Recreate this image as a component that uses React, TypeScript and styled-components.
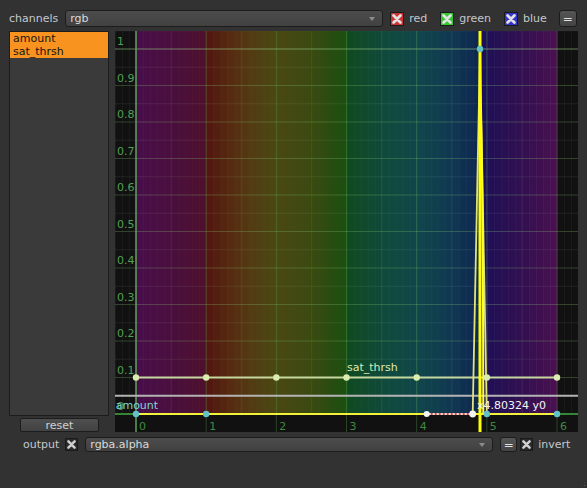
import React from 'react';
import styled, { createGlobalStyle } from 'styled-components';

const GlobalStyle = createGlobalStyle`
  html, body {
    margin: 0;
    padding: 0;
    background: #323232;
  }
  body {
    font-family: "DejaVu Sans", "Liberation Sans", sans-serif;
  }
`;

const Panel = styled.div`
  position: relative;
  width: 587px;
  height: 488px;
  background: #323232;
  color: #c4c8cc;
  font-size: 11px;
  display: flex;
  flex-direction: column;
  overflow: hidden;
`;

const Toolbar = styled.div`
  display: flex;
  align-items: center;
  height: 17px;
  margin-top: 10px;
  padding-left: 9px;
`;

const BottomBar = styled.div`
  display: flex;
  align-items: center;
  height: 15px;
  margin-top: 5px;
  padding-left: 23px;
`;

const Label = styled.span<{ $gap?: number }>`
  margin-left: ${(p) => p.$gap ?? 0}px;
  white-space: nowrap;
  line-height: 1;
`;

const Dropdown = styled.div<{ $w: number; $h: number; $gap: number }>`
  box-sizing: border-box;
  width: ${(p) => p.$w}px;
  height: ${(p) => p.$h}px;
  margin-left: ${(p) => p.$gap}px;
  border: 1px solid #1c1c1c;
  border-radius: 3px;
  background: linear-gradient(#4c4c4c, #414141);
  color: #dadada;
  display: flex;
  align-items: center;
  padding: 0 7px 0 4px;
`;

const DropText = styled.span`
  flex: 1;
  line-height: 1;
`;

const DropArrow = styled.span`
  width: 0;
  height: 0;
  border-left: 3px solid transparent;
  border-right: 3px solid transparent;
  border-top: 4px solid #8c8c8c;
`;

const CheckBox = styled.span<{ $fill: string; $size: number; $gap: number }>`
  box-sizing: border-box;
  width: ${(p) => p.$size}px;
  height: ${(p) => p.$size}px;
  margin-left: ${(p) => p.$gap}px;
  background: ${(p) => p.$fill};
  border: 1px solid #1a1a1a;
  display: flex;
  align-items: center;
  justify-content: center;
  flex-shrink: 0;
`;

const SmallButton = styled.div<{ $w: number; $h: number; $gap: number }>`
  box-sizing: border-box;
  width: ${(p) => p.$w}px;
  height: ${(p) => p.$h}px;
  margin-left: ${(p) => p.$gap}px;
  border: 1px solid #1c1c1c;
  border-radius: 3px;
  background: linear-gradient(#555, #444);
  color: #e0e0e0;
  display: flex;
  align-items: center;
  justify-content: center;
  font-size: 12px;
  line-height: 1;
`;

const Middle = styled.div`
  display: flex;
  height: 401px;
  margin-top: 4px;
`;

const LeftColumn = styled.div`
  display: flex;
  flex-direction: column;
  width: 100px;
  margin-left: 9px;
`;

const CurveList = styled.div`
  box-sizing: border-box;
  height: 386px;
  background: #3a3a3a;
  border: 1px solid #1c1c1c;
  display: flex;
  flex-direction: column;
`;

const CurveItem = styled.div`
  height: 13px;
  line-height: 13px;
  padding-left: 3px;
  background: #f7931e;
  color: #161616;
`;

const ResetButton = styled.div`
  box-sizing: border-box;
  width: 79px;
  height: 14px;
  margin: 2px 0 0 11px;
  border: 1px solid #1c1c1c;
  border-radius: 2px;
  background: linear-gradient(#4e4e4e, #424242);
  color: #cfcfcf;
  display: flex;
  align-items: center;
  justify-content: center;
  line-height: 1;
`;

const GraphBox = styled.div`
  width: 463px;
  height: 401px;
  margin-left: 6px;
  background: #111;
`;

const Grip = styled.div`
  position: absolute;
  right: 1px;
  bottom: 1px;
  width: 6px;
  height: 6px;
  background: radial-gradient(circle, #5a5a5a 0.7px, transparent 1px) 0 0 / 3px 3px;
  clip-path: polygon(100% 0, 100% 100%, 0 100%);
`;

const XMark = ({ size, color }: { size: number; color: string }) => (
  <svg width={size} height={size} viewBox="0 0 10 10">
    <path d="M1.6 1.6 L8.4 8.4 M8.4 1.6 L1.6 8.4" stroke={color} strokeWidth={2.8} strokeLinecap="round" />
  </svg>
);

// graph geometry (local coordinates of the curve canvas)
const W = 463;
const H = 401;
const X0 = 21;
const UX = 70.17;
const Y0 = 383;
const UY = 365;
const px = (x: number) => X0 + x * UX;
const py = (y: number) => Y0 - y * UY;

const hueStops: [number, [number, number, number]][] = [
  [0.0, [72, 14, 74]],
  [0.5, [74, 14, 62]],
  [0.95, [78, 16, 46]],
  [1.0, [82, 22, 16]],
  [1.3, [86, 40, 16]],
  [1.6, [84, 58, 18]],
  [2.0, [74, 72, 18]],
  [2.5, [58, 74, 16]],
  [2.95, [30, 78, 16]],
  [3.0, [16, 74, 32]],
  [3.5, [16, 74, 58]],
  [4.0, [16, 70, 74]],
  [4.5, [16, 56, 82]],
  [4.9, [14, 38, 80]],
  [4.92, [28, 16, 86]],
  [5.5, [50, 16, 80]],
  [6.0, [74, 16, 80]],
];

const hueAt = (t: number) => {
  for (let i = 0; i < hueStops.length - 1; i++) {
    const [a, ca] = hueStops[i];
    const [b, cb] = hueStops[i + 1];
    if (t >= a && t <= b) {
      const k = (t - a) / (b - a);
      const c = ca.map((v, j) => Math.round(v + (cb[j] - v) * k));
      return `rgb(${c[0]},${c[1]},${c[2]})`;
    }
  }
  return 'rgb(74,16,80)';
};

const bands = Array.from({ length: 60 }, (_, i) => ({
  x: px(i / 10),
  color: hueAt((i + 0.5) / 10),
}));

const yLabels = [1, 0.9, 0.8, 0.7, 0.6, 0.5, 0.4, 0.3, 0.2, 0.1];
const intX = [0, 1, 2, 3, 4, 5, 6];

const CurveGraph = () => (
  <svg width={W} height={H} viewBox={`0 0 ${W} ${H}`} fontFamily="DejaVu Sans, sans-serif" fontSize={11}>
    <rect x={0} y={0} width={W} height={H} fill="#111" />
    {/* faint stripes in the dark margins */}
    {Array.from({ length: 3 }, (_, i) => (
      <rect key={`l${i}`} x={i * 7} y={0} width={1} height={Y0} fill="#1a1a1a" />
    ))}
    {Array.from({ length: 3 }, (_, i) => (
      <rect key={`r${i}`} x={px(6) + 7 * (i + 1)} y={0} width={1} height={Y0} fill="#1a1a1a" />
    ))}
    {bands.map((b, i) => (
      <rect key={i} x={b.x} y={0} width={UX / 10 + 0.4} height={Y0} fill={b.color} />
    ))}
    {bands.map((b, i) => (
      <rect key={`s${i}`} x={b.x} y={0} width={1} height={Y0} fill="rgba(255,255,255,0.035)" />
    ))}

    {/* horizontal grid */}
    {Array.from({ length: 20 }, (_, i) => i + 2).map((k) => {
      const y = py(k * 0.05);
      const major = k % 2 === 0;
      const stroke = k === 20 ? 'rgba(150,200,130,0.6)' : major ? 'rgba(130,185,110,0.3)' : 'rgba(200,220,200,0.09)';
      return <line key={`h${k}`} x1={0} x2={W} y1={y} y2={y} stroke={stroke} strokeWidth={1} />;
    })}

    {/* vertical grid */}
    {Array.from({ length: 6 }, (_, i) => i + 0.5).map((v) => (
      <line key={`vh${v}`} x1={px(v)} x2={px(v)} y1={0} y2={Y0} stroke="rgba(200,220,200,0.08)" />
    ))}
    {intX.slice(1).map((v) => (
      <line key={`v${v}`} x1={px(v)} x2={px(v)} y1={0} y2={H} stroke="rgba(110,190,90,0.3)" />
    ))}
    <line x1={px(0)} x2={px(0)} y1={0} y2={H} stroke="#5fa05f" strokeWidth={1.5} />

    {/* axis labels */}
    {yLabels.map((v) => (
      <text key={`yl${v}`} x={2} y={py(v) - 4} fill="#52a052">
        {String(v)}
      </text>
    ))}
    <text x={2} y={py(0) - 4} fill="#52a052">0</text>
    {intX.map((v) => (
      <text key={`xl${v}`} x={px(v) + 3} y={399} fill="#3f8a3f">
        {v}
      </text>
    ))}

    {/* zero axis and highlight line */}
    <line x1={0} x2={W} y1={Y0} y2={Y0} stroke="#3fae3f" strokeWidth={1.5} />
    <line x1={0} x2={W} y1={py(0.05)} y2={py(0.05)} stroke="#b4b4b4" strokeWidth={2} />

    {/* sat_thrsh curve */}
    <line x1={px(0)} x2={px(6)} y1={py(0.1)} y2={py(0.1)} stroke="#c6d8a0" strokeWidth={2} />
    <text x={232} y={340} fill="#dde9b0">sat_thrsh</text>

    {/* amount curve */}
    <line x1={px(0)} x2={px(6)} y1={Y0} y2={Y0} stroke="#f2f23a" strokeWidth={2} />
    <path
      d="M357.7,383 C360.5,200 363.5,40 365,18 C366.5,40 369.5,200 371.8,383"
      fill="none"
      stroke="#e2e27a"
      strokeWidth={1.8}
    />
    <path d="M365,62 C366.8,90 368,160 368.3,383" fill="none" stroke="#ffff2a" strokeWidth={2} />
    <line x1={365} x2={365} y1={0} y2={H} stroke="#ffff00" strokeWidth={3} />

    {intX.map((v) => (
      <circle key={`sp${v}`} cx={px(v)} cy={py(0.1)} r={3.2} fill="#dcebae" />
    ))}

    <line x1={311.7} x2={357.7} y1={Y0} y2={Y0} stroke="#f0f0f0" strokeWidth={2} />
    <line x1={311.7} x2={357.7} y1={Y0} y2={Y0} stroke="#e04444" strokeWidth={2} strokeDasharray="2 2" />

    {[0, 1, 5, 6].map((v) => (
      <circle key={`ap${v}`} cx={px(v)} cy={Y0} r={3.2} fill="#62c2c8" />
    ))}
    <circle cx={365} cy={18} r={3.2} fill="#62c2c8" />
    <circle cx={311.7} cy={Y0} r={3} fill="#f4f4f4" />
    <circle cx={357.7} cy={Y0} r={3.4} fill="#f4f4f4" />

    <text x={0.7} y={378} fill="#7fd6d6">amount</text>
    <text x={362} y={378} fill="#f4f4f4">x4.80324 y0</text>
  </svg>
);

const App = () => (
  <Panel>
    <GlobalStyle />
    <Toolbar>
      <Label>channels</Label>
      <Dropdown $w={318} $h={17} $gap={7}>
        <DropText>rgb</DropText>
        <DropArrow />
      </Dropdown>
      <CheckBox $fill="#cc3434" $size={14} $gap={7}>
        <XMark size={10} color="#e2e2e2" />
      </CheckBox>
      <Label $gap={5}>red</Label>
      <CheckBox $fill="#34c834" $size={14} $gap={13}>
        <XMark size={10} color="#e2e2e2" />
      </CheckBox>
      <Label $gap={5}>green</Label>
      <CheckBox $fill="#3434c8" $size={14} $gap={13}>
        <XMark size={10} color="#e2e2e2" />
      </CheckBox>
      <Label $gap={5}>blue</Label>
      <SmallButton $w={18} $h={17} $gap={12}>=</SmallButton>
    </Toolbar>

    <Middle>
      <LeftColumn>
        <CurveList>
          <CurveItem>amount</CurveItem>
          <CurveItem>sat_thrsh</CurveItem>
        </CurveList>
        <ResetButton>reset</ResetButton>
      </LeftColumn>
      <GraphBox>
        <CurveGraph />
      </GraphBox>
    </Middle>

    <BottomBar>
      <Label>output</Label>
      <CheckBox $fill="#2a2a2a" $size={13} $gap={6}>
        <XMark size={9} color="#cfcfcf" />
      </CheckBox>
      <Dropdown $w={408} $h={15} $gap={7}>
        <DropText>rgba.alpha</DropText>
        <DropArrow />
      </Dropdown>
      <SmallButton $w={17} $h={15} $gap={7}>=</SmallButton>
      <CheckBox $fill="#2a2a2a" $size={13} $gap={3}>
        <XMark size={9} color="#cfcfcf" />
      </CheckBox>
      <Label $gap={5}>invert</Label>
    </BottomBar>
    <Grip />
  </Panel>
);

export default App;
